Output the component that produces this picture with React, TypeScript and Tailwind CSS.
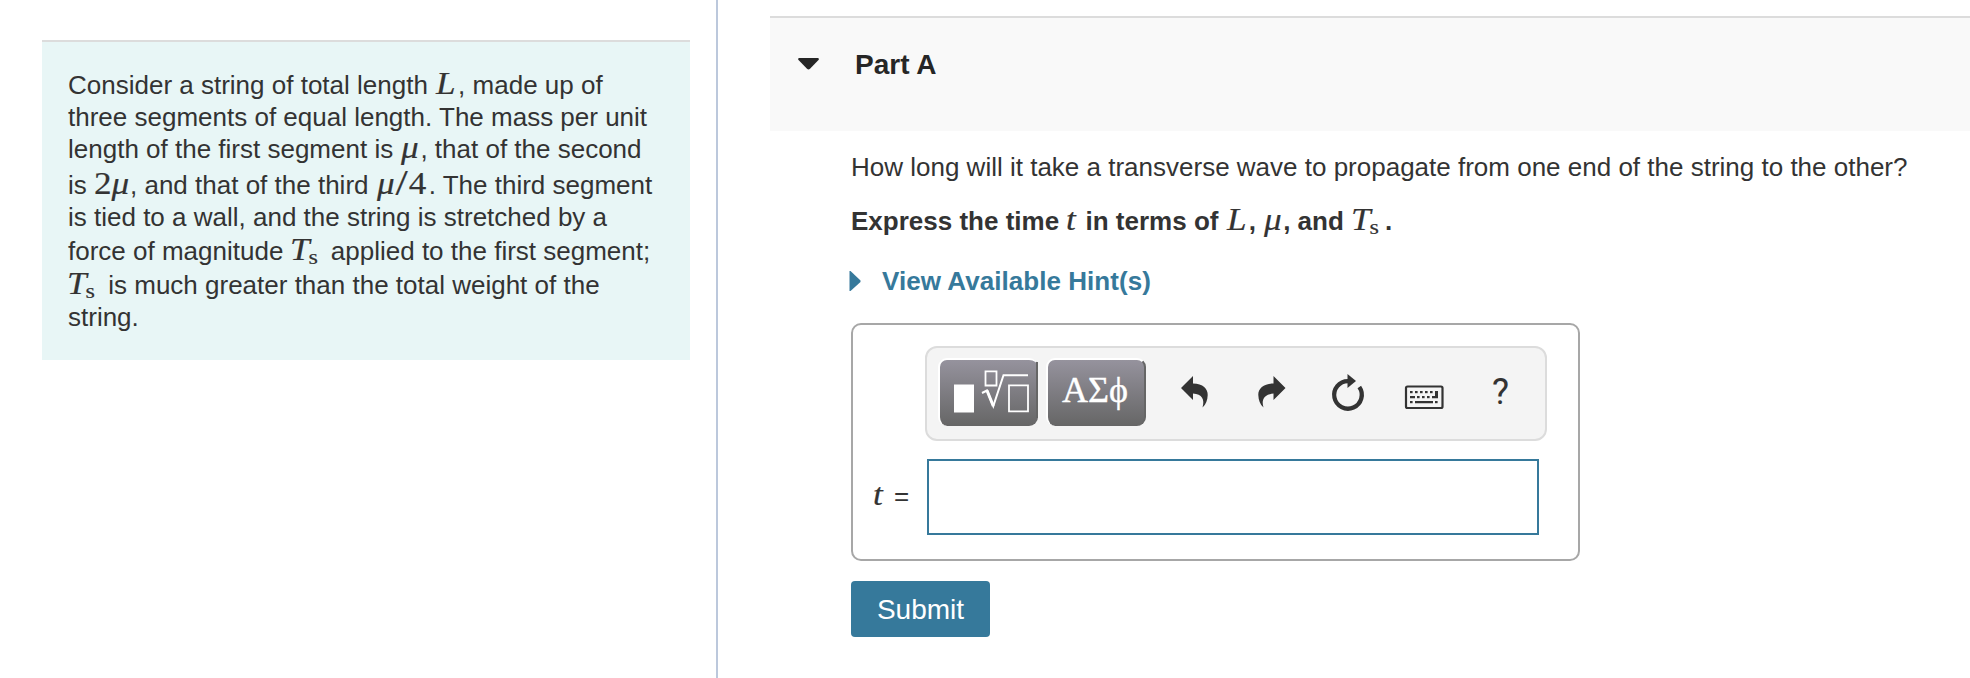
import type { ReactNode } from 'react';

function V({ children, className }: { children: ReactNode; className: string }) {
  return (
    <span className={`inline-block h-0 leading-[0] font-normal font-['Liberation_Serif',serif] text-[32px] ${className}`}>
      <span className="inline-block origin-left scale-x-110 [-webkit-text-stroke:0.2px_#333]">{children}</span>
    </span>
  );
}

function Ts({ className }: { className: string }) {
  return (
    <V className={className}>
      <i className="-ml-[1px]">T</i>
      <span className="relative top-[4px] -ml-[1px] text-[22px]">s</span>
    </V>
  );
}

function Line({ children, className = '' }: { children: ReactNode; className?: string }) {
  return <div className={`h-8 whitespace-pre ${className}`}>{children}</div>;
}

const keyDots = [
  [1410, 391], [1415, 391], [1420, 391], [1425, 391], [1430, 391],
  [1417, 396], [1422, 396], [1427, 396], [1410, 401], [1435, 401],
];

export default function App() {
  return (
    <div className="flex h-[678px] w-[1970px] overflow-hidden bg-white font-['Liberation_Sans',Arial,sans-serif] text-[26px] leading-8 text-[#333]">
      <aside className="h-full w-[718px] shrink-0 border-r-2 border-[#bcc8dc] pt-10 pl-[42px]">
        <section className="h-[320px] w-[648px] border-t-2 border-[#dcdcdc] bg-[#e8f6f6] pt-[27px] pl-[26px]">
          <Line>Consider a string of total length <V className="w-[23px] pl-[1px] italic">L</V>, made up of</Line>
          <Line>three segments of equal length. The mass per unit</Line>
          <Line>length of the first segment is <V className="w-[20px] pl-[1px] italic">μ</V>, that of the second</Line>
          <Line className="mt-1">is <V className="w-[36px]">2<i>μ</i></V>, and that of the third <V className="w-[53px] pl-[1px]"><i>μ</i><span className="mx-[2px] inline-block origin-center scale-x-125 scale-y-110">/</span>4</V>. The third segment</Line>
          <Line>is tied to a wall, and the string is stretched by a</Line>
          <Line className="mt-0.5">force of magnitude <Ts className="w-[33px]" /> applied to the first segment;</Line>
          <Line className="mt-0.5"><Ts className="w-[33px]" /> is much greater than the total weight of the</Line>
          <Line>string.</Line>
        </section>
      </aside>

      <main className="flex min-w-0 flex-1 flex-col pt-4 pl-[52px]">
        <header className="flex h-[115px] shrink-0 border-t-2 border-[#dcdcdc] bg-[#f9f9f9] pt-[30px] pl-7 text-[#262626]">
          <svg width="21" height="12" viewBox="0 0 21 12" className="mt-[10px]" fill="currentColor">
            <path d="M1 0H20Q21.5 0.6 20.5 2L12 10.8Q10.5 12.3 9 10.8L0.5 2Q-0.5 0.6 1 0Z" />
          </svg>
          <h2 className="mt-px ml-9 text-[28px] font-bold">Part A</h2>
        </header>

        <div className="flex flex-col items-start pl-[81px]">
          <p className="mt-5 h-8 whitespace-pre">How long will it take a transverse wave to propagate from one end of the string to the other?</p>
          <p className="mt-[22px] h-8 font-bold whitespace-pre">Express the time <V className="w-[12px] italic">t</V> in terms of <V className="w-[23px] pl-[1px] italic">L</V>, <V className="w-[20px] pl-[1px] italic">μ</V>, and <Ts className="w-[34px] pl-[1px]" />.</p>
          <a className="mt-7 -ml-[2px] flex h-8 items-center text-[#36799b]">
            <svg width="12" height="20" viewBox="0 0 12 20" fill="currentColor">
              <path d="M0.5 0H1.5L11.5 9.5V11L1.5 20H0.5Z" />
            </svg>
            <span className="ml-[21px] font-bold tracking-[0.05px] whitespace-pre">View Available Hint(s)</span>
          </a>

          <div className="mt-[26px] flex h-[238px] w-[729px] flex-col rounded-[10px] border-2 border-[#a7a7a7] pt-[21px]">
            <div className="ml-[72px] flex h-[95px] w-[622px] rounded-xl border-2 border-[#dcdcdc] bg-[#f4f4f4] pt-[10px] pl-[11px]">
              <button className="flex h-[68px] w-[100px] rounded-[9px] border-t-2 border-l-2 border-white bg-linear-to-b from-[#97949f] to-[#666] bg-origin-border">
                <svg width="98" height="66" viewBox="940 360 98 66" fill="none" stroke="#fff" strokeWidth="1.8">
                  <path d="M1037 362V418" stroke="#666" strokeWidth="2" />
                  <path d="M954 384.5H974V412.5H954Z" fill="#fff" stroke="none" />
                  <path d="M985.5 371.3H996.5V385.5H985.5ZM1009 385.3H1028V411.3H1009Z" />
                  <path d="M982 393L987 390.5L993.3 406L1003.5 375.3H1028" strokeWidth="2" />
                  <path d="M987 390.5L993.3 406" strokeWidth="3" />
                </svg>
              </button>
              <button className="ml-[8px] flex h-[68px] w-[100px] justify-center rounded-[9px] border-t-2 border-r-2 border-l-2 border-t-white border-r-[#666] border-l-white bg-linear-to-b from-[#97949f] to-[#666] bg-origin-border pt-[12px] pr-[2px] font-['Liberation_Serif',serif] text-[36px] leading-[36px] text-white [-webkit-text-stroke:0.4px_#fff]">
                ΑΣϕ
              </button>
              <svg width="310" height="66" viewBox="1146 358 310 66" fill="#333">
                <path d="M1181 388L1193 376V383.5C1203 383.5 1208 389 1207.7 395C1207.5 400 1206 404.5 1202.5 407.5C1205 399.5 1202 394 1193 393.5V400Z" />
                <path d="M1285.5 388L1273.5 376V383.5C1263.5 383.5 1258 389 1258.3 395C1258.5 400 1260 404.5 1263.5 407.5C1261 399.5 1264.5 394 1273.5 393.5V400Z" />
                <path d="M1348 381.1A13.8 13.8 0 1 0 1359.3 387" fill="none" stroke="#333" strokeWidth="4.3" />
                <path d="M1347.5 374L1356 381L1347.5 388Z" />
                <rect x="1406" y="386.5" width="36.5" height="21.5" rx="1.5" fill="none" stroke="#333" strokeWidth="2.2" />
                {keyDots.map(([x, y]) => (
                  <rect key={`${x}-${y}`} x={x} y={y} width="2.6" height="2.2" />
                ))}
                <path d="M1410 396H1415V398.2H1410ZM1415 401H1433V403.2H1415ZM1435 391H1438V398.2H1432V396H1435Z" />
              </svg>
              <span className="ml-[36px] pt-[14px] font-['Roboto',sans-serif] text-[36px] leading-[40px]">?</span>
            </div>
            <div className="mt-[18px] flex">
              <label className="w-[74px] shrink-0 pt-[21px] pl-[20px] whitespace-pre"><V className="w-[21px] italic">t</V>=</label>
              <input className="h-[76px] w-[612px] border-2 border-[#36799b] bg-white outline-none" />
            </div>
          </div>

          <button className="mt-5 h-14 w-[139px] rounded-[4px] bg-[#36799b] pt-px text-[28px] text-white">Submit</button>
        </div>
      </main>
    </div>
  );
}
